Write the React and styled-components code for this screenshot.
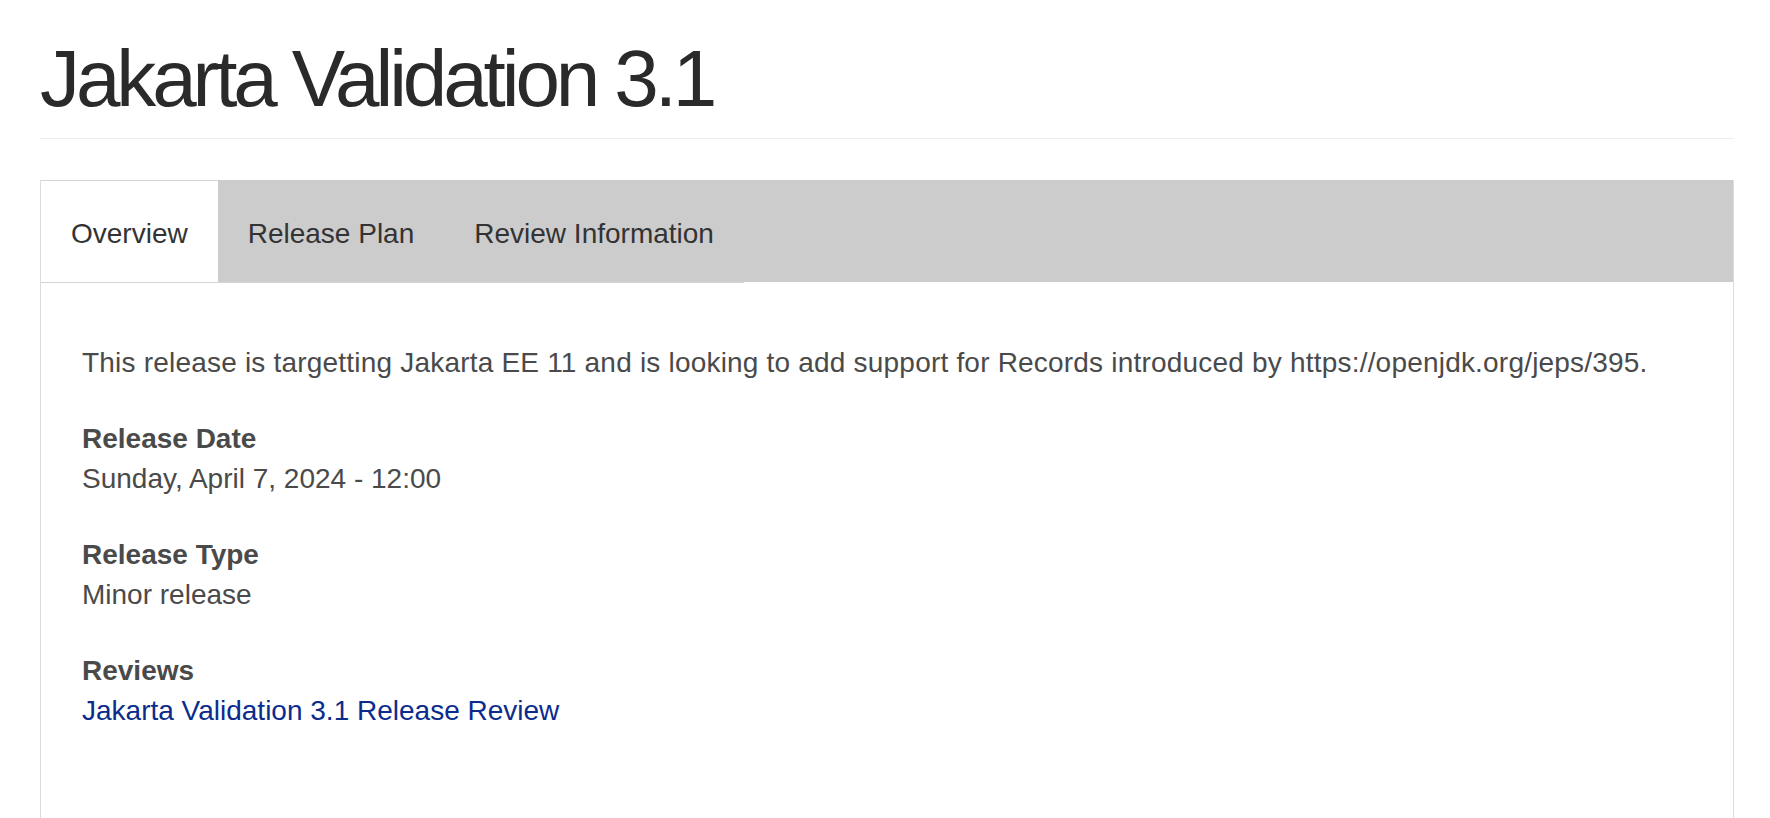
import React, { useState } from "react";
import styled, { createGlobalStyle } from "styled-components";

const GlobalStyle = createGlobalStyle`
  html, body {
    margin: 0;
    padding: 0;
    background: #fff;
  }
  body {
    font-family: "Liberation Sans", Arial, Helvetica, sans-serif;
    font-size: 28px;
    line-height: 40px;
    color: #4a4a4a;
  }
`;

const TABS = ["Overview", "Release Plan", "Review Information"];

const FIELDS = [
  { label: "Release Date", value: "Sunday, April 7, 2024 - 12:00" },
  { label: "Release Type", value: "Minor release" },
  {
    label: "Reviews",
    value: "Jakarta Validation 3.1 Release Review",
    href: "#",
  },
];

function App() {
  const [active, setActive] = useState(0);

  return (
    <>
      <GlobalStyle />
      <Page>
        <Header>
          <Title>Jakarta Validation 3.1</Title>
        </Header>

        <TabBox>
          <TabBar>
            <TabList>
              {TABS.map((tab, i) => (
                <Tab key={tab} $active={i === active} onClick={() => setActive(i)}>
                  {tab}
                </Tab>
              ))}
            </TabList>
          </TabBar>

          <TabContent>
            <Intro>
              This release is targetting Jakarta EE 11 and is looking to add
              support for Records introduced by https://openjdk.org/jeps/395.
            </Intro>

            {FIELDS.map((field) => (
              <Field key={field.label}>
                <Label>{field.label}</Label>
                {field.href ? (
                  <Link href={field.href}>{field.value}</Link>
                ) : (
                  <Value>{field.value}</Value>
                )}
              </Field>
            ))}
          </TabContent>
        </TabBox>
      </Page>
    </>
  );
}

const Page = styled.div`
  padding: 0 36px 0 40px;
`;

const Header = styled.div`
  padding-top: 35px;
  padding-bottom: 15px;
  border-bottom: 1px solid #eee;
`;

const Title = styled.h1`
  margin: 0;
  font-size: 80px;
  line-height: 88px;
  font-weight: 400;
  letter-spacing: -4.1px;
  color: #2a2a2a;
`;

const TabBox = styled.div`
  margin-top: 41px;
  border: 1px solid #dcdcdc;
  border-top: 0;
`;

const TabBar = styled.div`
  background: #cccccc;
  height: 102px;
`;

const TabList = styled.ul`
  display: inline-flex;
  margin: 0;
  padding: 0;
  list-style: none;
  border-bottom: 1px solid #d4d4d4;
`;

const Tab = styled.li`
  padding: 33px 30px 28px;
  font-size: 28px;
  line-height: 40px;
  color: #333;
  cursor: pointer;
  background: ${(p) => (p.$active ? "#fff" : "transparent")};
  border-top: 1px solid ${(p) => (p.$active ? "#d4d4d4" : "#ccc")};
`;

const TabContent = styled.div`
  padding: 61px 41px 140px;
`;

const Intro = styled.p`
  margin: 0 0 36px;
  letter-spacing: 0.2px;
`;

const Field = styled.div`
  margin-bottom: 36px;
`;

const Label = styled.div`
  font-weight: 700;
  color: #4a4a4a;
`;

const Value = styled.div`
  color: #4a4a4a;
`;

const Link = styled.a`
  color: #0b2c8c;
  text-decoration: none;
`;

export default App;
